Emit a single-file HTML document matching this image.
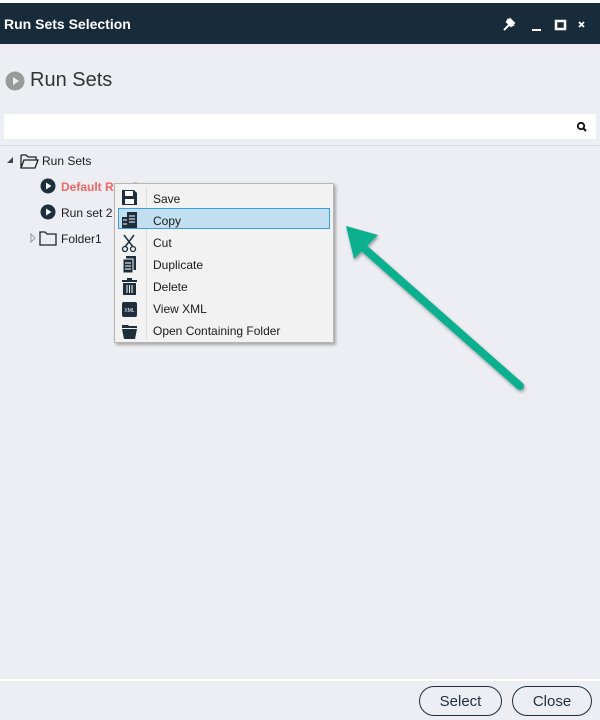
<!DOCTYPE html><html><head><style>
body{margin:0;width:600px;height:720px;background:#edeef3;font-family:"Liberation Sans",sans-serif;position:relative;overflow:hidden;font-size:12px;color:#1a1a1a}
.a{position:absolute}
.tb{left:0;top:3px;width:600px;height:41px;background:#172b3a;color:#fff;font-weight:bold;font-size:14px}
.mi{position:absolute;left:38px;font-size:12px}
.btn{position:absolute;top:686px;height:30px;border:1.5px solid #1d2e3d;border-radius:15px;box-sizing:border-box;text-align:center;line-height:30px;font-size:15px;color:#1d2e3d}
</style></head><body>
<div class="a" style="left:0;top:0;width:600px;height:3px;background:#fff"></div>
<div class="a tb"><span class="a" style="left:4px;top:13px">Run Sets Selection</span>
<svg class="a" style="left:500px;top:12px" width="90" height="18"><path d="M4 15 L9 10 M8 5 L13 10 L11 11 L7 7Z M7 7 L10 4 L14 8 L11 11Z" stroke="#fff" stroke-width="2" fill="#fff"/><rect x="32" y="14" width="9" height="2" fill="#fff"/><rect x="56" y="6" width="9" height="8" fill="none" stroke="#fff" stroke-width="2.5"/><path d="M79 7 L84 12 M84 7 L79 12" stroke="#fff" stroke-width="1.8"/></svg></div>
<svg class="a" style="left:5px;top:71px" width="20" height="20"><circle cx="10" cy="10" r="9.5" fill="#9a9a9a"/><path d="M8 6 L14 10 L8 14Z" fill="#eee"/></svg>
<div class="a" style="left:30px;top:69px;font-size:20px;color:#333">Run Sets</div>
<div class="a" style="left:4px;top:114px;width:592px;height:25px;background:#fff"></div>
<svg class="a" style="left:576px;top:121px" width="12" height="12"><circle cx="5" cy="5" r="3.2" fill="none" stroke="#111" stroke-width="1.8"/><path d="M7 7 L10 10" stroke="#111" stroke-width="2"/></svg>
<div class="a" style="left:0;top:145px;width:600px;height:1px;background:#d8d8dc"></div>
<svg class="a" style="left:6px;top:150px" width="60" height="100"><path d="M1 13 L7 13 L7 7Z" fill="#444"/><path d="M15 5 h5 l2 2 h8 v3 M15 5 v13 h14 l3 -8 h-14 l-3 8" fill="none" stroke="#222" stroke-width="1.3"/><path d="M25 84 L29 88 L25 92Z" fill="none" stroke="#999"/><path d="M34 82 h5 l2 2 h9 v11 h-16z" fill="none" stroke="#222" stroke-width="1.3"/></svg>
<div class="a" style="left:42px;top:154px">Run Sets</div>
<svg class="a" style="left:40px;top:178px" width="16" height="44"><circle cx="8" cy="8" r="7.5" fill="#1d2e3d"/><path d="M6 4.5 L11.5 8 L6 11.5Z" fill="#fff"/><circle cx="8" cy="34" r="7.5" fill="#1d2e3d"/><path d="M6 30.5 L11.5 34 L6 37.5Z" fill="#fff"/></svg>
<div class="a" style="left:61px;top:180px;color:#f06666;font-weight:bold">Default Run Set</div>
<div class="a" style="left:61px;top:206px">Run set 2</div>
<div class="a" style="left:61px;top:232px">Folder1</div>
<div class="a" style="left:114px;top:183px;width:220px;height:160px;background:#f2f2f2;border:1px solid #b5b5b5;box-sizing:border-box;box-shadow:2px 2px 3px rgba(0,0,0,.3)">
<div class="a" style="left:31px;top:3px;width:1px;height:153px;background:#e0e0e0"></div>
<div class="a" style="left:3px;top:24px;width:212px;height:21px;background:#c1dff0;border:1px solid #3aa0dc;box-sizing:border-box"></div>
<div class="mi" style="top:8px">Save</div><div class="mi" style="top:30px">Copy</div><div class="mi" style="top:52px">Cut</div><div class="mi" style="top:74px">Duplicate</div><div class="mi" style="top:96px">Delete</div><div class="mi" style="top:118px">View XML</div><div class="mi" style="top:140px">Open Containing Folder</div>
<svg class="a" style="left:6px;top:5px" width="18" height="152"><path d="M1 1h12l3 3v12h-15z" fill="#1d2e3d"/><rect x="4" y="2" width="8" height="5" fill="#fff"/><rect x="4" y="10" width="9" height="5" fill="#fff"/>
<rect x="1" y="28" width="6" height="11" fill="#1d2e3d"/><rect x="6" y="23" width="10" height="16" fill="#1d2e3d"/><path d="M8 27h6M8 30h6M8 33h6M2 31h4M2 35h4" stroke="#fff"/>
<path d="M3 46 L12 58 M13 46 L4 58" stroke="#1d2e3d" stroke-width="1.5"/><circle cx="4" cy="60" r="2.5" fill="none" stroke="#1d2e3d" stroke-width="1.3"/><circle cx="12" cy="60" r="2.5" fill="none" stroke="#1d2e3d" stroke-width="1.3"/>
<rect x="5" y="67" width="10" height="14" fill="#1d2e3d"/><rect x="2" y="70" width="10" height="14" fill="#1d2e3d" stroke="#f2f2f2"/><path d="M4 74h6M4 77h6M4 80h6" stroke="#fff"/>
<rect x="1" y="91" width="15" height="2" fill="#1d2e3d"/><rect x="6" y="89" width="5" height="2" fill="#1d2e3d"/><path d="M2 94h13v12h-13z" fill="#1d2e3d"/><path d="M6 96v8M8.5 96v8M11 96v8" stroke="#fff"/>
<rect x="1" y="113" width="15" height="15" rx="2" fill="#1d2e3d"/><text x="8.5" y="123" font-size="5" fill="#fff" text-anchor="middle" font-family="Liberation Sans">XML</text>
<path d="M1 136h6l1 1h8v2h-15z M1 140h15l-2 10h-11z" fill="#1d2e3d"/></svg></div>
<svg class="a" style="left:330px;top:215px" width="210" height="190"><defs><filter id="s"><feDropShadow dx="1" dy="2" stdDeviation="1.5" flood-opacity=".35"/></filter></defs><g filter="url(#s)"><path d="M28 28 L190 171" stroke="#08b08e" stroke-width="8" stroke-linecap="round"/><path d="M16 11 L48 20 L24 44Z" fill="#08b08e"/></g></svg>
<div class="a" style="left:0;top:679px;width:600px;height:2px;background:#fff"></div>
<div class="btn" style="left:419px;width:83px">Select</div>
<div class="btn" style="left:512px;width:80px">Close</div>
</body></html>
